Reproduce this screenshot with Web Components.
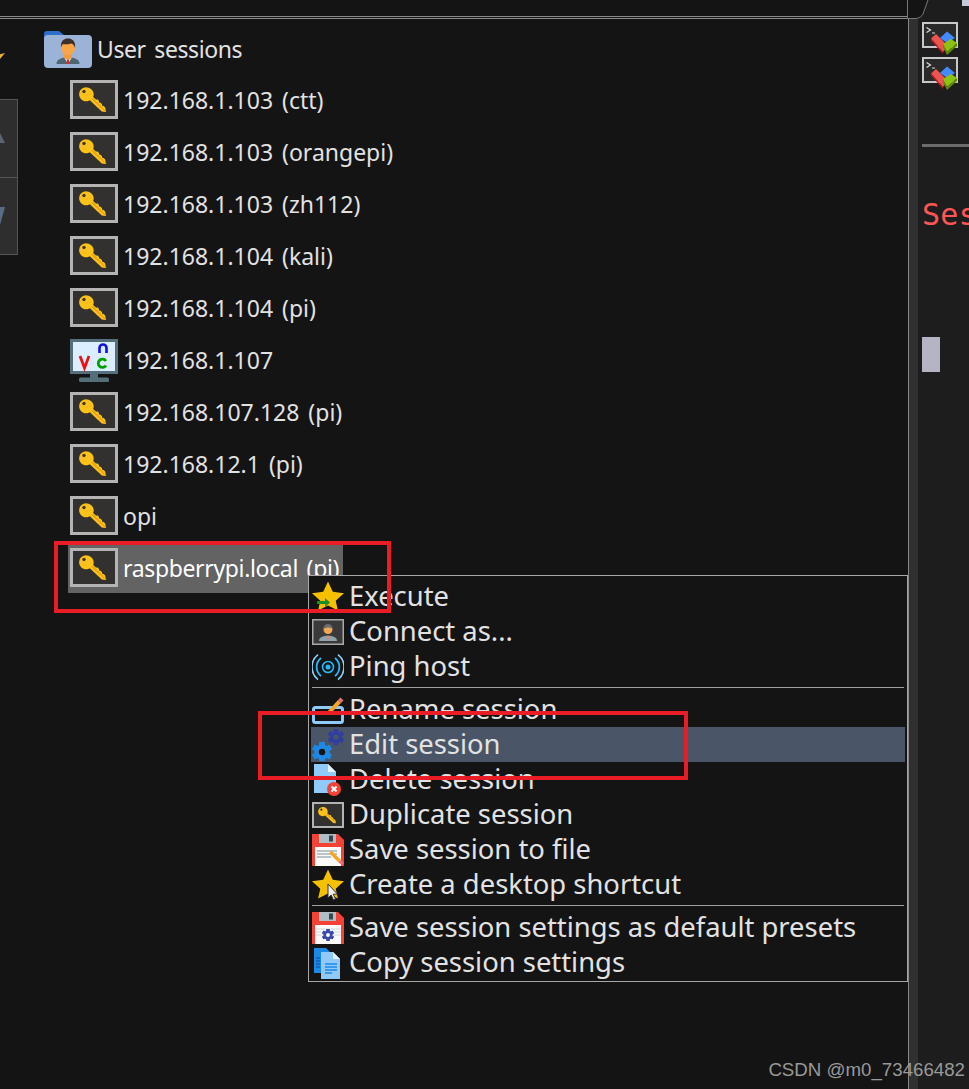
<!DOCTYPE html>
<html>
<head>
<meta charset="utf-8">
<title>User sessions</title>
<style>
  html, body { margin: 0; height: 100%; background: #141414; overflow: hidden; }
  body { font-family: "Noto Sans", "Open Sans", sans-serif; color: #e2e2e2; }
</style>
</head>
<body>
<app-shell>
  <side-strip slot="strip"></side-strip>
  <session-tree slot="tree">
    <session-row kind="folder" top>User sessions</session-row>
    <session-row>192.168.1.103 (ctt)</session-row>
    <session-row>192.168.1.103 (orangepi)</session-row>
    <session-row>192.168.1.103 (zh112)</session-row>
    <session-row>192.168.1.104 (kali)</session-row>
    <session-row>192.168.1.104 (pi)</session-row>
    <session-row kind="vnc">192.168.1.107</session-row>
    <session-row>192.168.107.128 (pi)</session-row>
    <session-row>192.168.12.1 (pi)</session-row>
    <session-row>opi</session-row>
    <session-row selected>raspberrypi.local (pi)</session-row>
  </session-tree>
  <terminal-pane slot="term"></terminal-pane>
</app-shell>

<context-menu>
  <menu-item icon="run">Execute</menu-item>
  <menu-item icon="user">Connect as...</menu-item>
  <menu-item icon="ping">Ping host</menu-item>
  <menu-sep></menu-sep>
  <menu-item icon="rename">Rename session</menu-item>
  <menu-item icon="gears" active>Edit session</menu-item>
  <menu-item icon="del">Delete session</menu-item>
  <menu-item icon="key">Duplicate session</menu-item>
  <menu-item icon="savefile">Save session to file</menu-item>
  <menu-item icon="star">Create a desktop shortcut</menu-item>
  <menu-sep></menu-sep>
  <menu-item icon="savegear">Save session settings as default presets</menu-item>
  <menu-item icon="copy">Copy session settings</menu-item>
</context-menu>

<mark-box style="left:54px;top:541px;width:337px;height:72px"></mark-box>
<mark-box style="left:258px;top:711px;width:430px;height:69px"></mark-box>
<water-mark>CSDN @m0_73466482</water-mark>

<script>
// icon drawings, shared by the tree and the menu
const keyShape = `
  <path d="M17 7.500a7 7 0 0 1 6.200 9.600l3 2.600 1.200-.4 1.600 1.600.1 1.600 1.500.2 1.400 1.500.2 1.600 1.400.1 1.600 1.700.6 3-.8 1.300-3.200-.3-12-11.300a7 7 0 1 1-2.800-12.900z" fill="#fcc21b"/>
  <path d="M21 18.500l14.500 13.500 1-.5-13-13z" fill="#e3a20f"/>
  <circle cx="14" cy="11.500" r="1.700" fill="#46350c"/>`;

const gear = (cx, cy, r, fill, hole) => {
  let teeth = '';
  for (let a = 0; a < 360; a += 60) {
    teeth += `<rect x="${cx - r * .34}" y="${cy - r * 1.3}" width="${r * .68}" height="${r * 2.6}" fill="${fill}" transform="rotate(${a} ${cx} ${cy})"/>`;
  }
  return teeth + `<circle cx="${cx}" cy="${cy}" r="${r}" fill="${fill}"/><circle cx="${cx}" cy="${cy}" r="${r * .42}" fill="${hole}"/>`;
};

const floppy = `
  <path d="M0 0h26l6 6v26H0z" fill="#f44336"/>
  <path d="M7 0h17v9H7z" fill="#b0bec5"/><rect x="17" y="1.500" width="4" height="6" fill="#37474f"/>
  <rect x="3" y="13" width="26" height="19" fill="#fafafa"/>`;

const star = `<path d="M16 .5l4.800 10.300 11.200 1.400-8.300 7.600 2.200 9.700L16 24.400 6.100 29.500l2.200-9.700L0 12.200l11.200-1.400z" fill="#f5c000"/>`;

const ICONS = {
  key: `<svg width="32" height="26" viewBox="0 0 48 39" style="margin-top:1px"><rect x="1.500" y="1.500" width="45" height="36" fill="#333130" stroke="#b4b4b4" stroke-width="3"/>${keyShape}</svg>`,
  run: `<svg width="32" height="32" viewBox="0 0 32 32">${star}<path d="M5 20h8v-3l5 4.500-5 4.500v-3H5z" fill="#1e8e1e"/></svg>`,
  star: `<svg width="32" height="32" viewBox="0 0 32 32">${star}<path d="M16 15v14l3.200-3 2.300 5 2-1-2.300-4.800h4.300z" fill="#eee" stroke="#333" stroke-width="1"/></svg>`,
  user: `<svg width="32" height="26" viewBox="0 0 32 26"><rect x=".75" y=".75" width="30.500" height="24.500" fill="#3a3a3a" stroke="#a8a8a8" stroke-width="1.500"/>
    <path d="M7 22c0-4 4-5 9-5.500 5 .5 9 1.500 9 5.500z" fill="#8fa3ad"/><path d="M14.500 17h3l-1.500 5z" fill="#e8836b"/>
    <circle cx="16" cy="10.500" r="4.500" fill="#f2a65a"/><path d="M11.500 10c0-3.500 2-5 4.500-5s4.500 1.500 4.500 5c-2-2-6-2-9 0z" fill="#6d6d6d"/></svg>`,
  ping: `<svg width="32" height="32" viewBox="0 0 32 32" fill="none"><circle cx="16" cy="16" r="2.500" fill="#29b6f6"/>
    <circle cx="16" cy="16" r="5.500" stroke="#29b6f6" stroke-width="1.600"/>
    <path d="M9 7A11.500 11.500 0 0 0 9 25M23 7A11.500 11.500 0 0 1 23 25" stroke="#29b6f6" stroke-width="1.800"/>
    <path d="M6 3.500A16 16 0 0 0 6 28.500M26 3.500A16 16 0 0 1 26 28.500" stroke="#8fd0f5" stroke-width="1.600"/></svg>`,
  rename: `<svg width="32" height="32" viewBox="0 0 32 32"><rect x="1.500" y="13.500" width="29" height="15" rx="2" fill="none" stroke="#90caf9" stroke-width="3"/>
    <path d="M15 18l11-12 3 3-11 11-4 1z" fill="#f5a623"/><path d="M26 6l2.500-2.500 3 3L29 9z" fill="#e57373"/></svg>`,
  gears: `<svg width="32" height="32" viewBox="0 0 32 32">${gear(24, 8, 6.200, '#303f9f', '#4a5568')}${gear(10, 23, 7.700, '#1e88e5', '#141414')}</svg>`,
  del: `<svg width="32" height="32" viewBox="0 0 32 32"><path d="M2 0h14l8 8v21H2z" fill="#90caf9"/><path d="M16 0l8 8h-8z" fill="#e3f2fd"/>
    <circle cx="22" cy="25" r="7" fill="#f44336"/><path d="M19.500 22.500l5 5M24.500 22.500l-5 5" stroke="#fff" stroke-width="2"/></svg>`,
  savefile: `<svg width="32" height="32" viewBox="0 0 32 32">${floppy}<path d="M5 17h20M5 20h20M5 23h14" stroke="#78909c" stroke-width="1.200"/><path d="M17 19l3-2 9 9-3 2z" fill="#f5a623"/><path d="M26 28l3-2 3 3-2 2z" fill="#e57373"/></svg>`,
  savegear: `<svg width="32" height="32" viewBox="0 0 32 32">${floppy}<path d="M3 17h26M3 20h26M3 23h26" stroke="#cfd8dc" stroke-width="1"/>${gear(16, 23, 4.600, '#3949ab', '#fff')}</svg>`,
  copy: `<svg width="32" height="32" viewBox="0 0 32 32"><path d="M2 1h12l6 6v19H2z" fill="#1e88e5"/><path d="M9 5h12l7 7v20H9z" fill="#90caf9"/><path d="M21 5l7 7h-7z" fill="#e3f2fd"/>
    <path d="M4 11h4M4 14h4M4 17h4M4 20h4" stroke="#0d47a1" stroke-width="1.200"/><path d="M13 17h12M13 20h12M13 23h12M13 26h7" stroke="#1e88e5" stroke-width="1.400"/></svg>`
};

const keyBig = `<svg width="48" height="39" viewBox="0 0 48 39"><rect x="1.500" y="1.500" width="45" height="36" fill="#333130" stroke="#b4b4b4" stroke-width="3"/>${keyShape}</svg>`;
const vncBig = `<svg width="48" height="44" viewBox="0 0 48 44" style="margin-top:2px"><rect x="1.500" y="1.500" width="45" height="32" fill="#dbeeff" stroke="#546e7a" stroke-width="3"/>
  <rect x="20" y="35" width="8" height="4" fill="#546e7a"/><rect x="9" y="38.500" width="30" height="4.500" rx="1.500" fill="#546e7a"/>
  <path d="M10 17l4.500 12L19 17" fill="none" stroke="#f01010" stroke-width="2.800"/>
  <path d="M29.500 14v-5a3.500 3.500 0 0 1 7 0v5" fill="none" stroke="#1010e0" stroke-width="2.600"/>
  <path d="M37 22a4.200 4.200 0 1 0 0 4.500" fill="none" stroke="#00a000" stroke-width="2.800" transform="translate(-1 0)"/></svg>`;
const folderBig = `<svg width="48" height="38" viewBox="0 0 48 38"><path d="M0 4a3 3 0 0 1 3-3h12l5 4H8v10H0z" fill="#2f6fc9"/><rect y="5" width="48" height="33" rx="4" fill="#9ab3d6"/>
  <path d="M12.500 34c0-5 5-6 11.500-7 6.500 1 11.500 2 11.500 7z" fill="#4c6672"/><path d="M20 27h8l-4 7z" fill="#fff"/><path d="M23 28h2l.5 6h-3z" fill="#d32f2f"/>
  <path d="M20 24h8v4l-4 2-4-2z" fill="#f39a3e"/><circle cx="24" cy="18" r="7" fill="#f7a64a"/><path d="M17 18c-1-8 4-9.500 7-9.500s8 1.500 7 9.500c-1-3-2-4-4-4.500-3 1-7 1-8 .5-1 1-2 2-2 4z" fill="#3e2f2a"/></svg>`;
const termIcon = `<svg width="38" height="35" viewBox="0 0 38 35"><rect x="1" y="1" width="34" height="24" fill="#2a2a2a" stroke="#c8c8c8" stroke-width="2"/>
  <path d="M4.500 5.500l4 2.500-4 2.500M10 11h3" fill="none" stroke="#ddd" stroke-width="1.200"/>
  <path d="M9 16.500l5-4.500 12 12-5 6z" fill="#ef5350"/><path d="M9 16.500v2l12 13.500v-2z" fill="#b71c1c"/>
  <path d="M18 16l7-6.500 8 6.500-8 5z" fill="#448aff"/>
  <path d="M21 22l8-5 6 4-10 9z" fill="#8bc310"/><path d="M21 22v3l4 8 10-9v-3l-10 9z" fill="#5d8a08"/></svg>`;

class AppShell extends HTMLElement {
  constructor() {
    super();
    this.attachShadow({ mode: 'open' });
    this.shadowRoot.innerHTML = `
      <style>
        :host { display: grid; grid-template-columns: 18px 890px 10px 51px; grid-template-rows: 19px 1070px; width: 969px; height: 1089px; background: #141414; }
        .top { grid-column: 1 / 3; box-sizing: border-box; padding-top: 16px; border-right: 1px solid #777; }
        .top i { display: block; height: 1px; background: #8a8a8a; margin-bottom: 1px; }
        .topright { grid-column: 3 / 5; position: relative; background: #1d1d1d; }
        .topright svg { display: block; }
        .tab { position: absolute; right: 0; top: 0; width: 7px; height: 6px; background: #c6c9d6; }
        .bar { background: #303030; border-left: 1px solid #888; box-sizing: border-box; }
      </style>
      <div class="top"><i></i><i></i></div>
      <div class="topright">
        <svg width="61" height="19" viewBox="0 0 61 19"><path d="M0 18.500H8C12 18 14 16 15 14L20 0H0z" fill="#141414"/><path d="M0 18.500H8C12 18 14 16 15 14L20 0" fill="none" stroke="#777"/></svg>
        <div class="tab"></div>
      </div>
      <slot name="strip"></slot>
      <slot name="tree"></slot>
      <div class="bar"></div>
      <slot name="term"></slot>`;
  }
}

class SideStrip extends HTMLElement {
  constructor() {
    super();
    this.attachShadow({ mode: 'open' });
    this.shadowRoot.innerHTML = `
      <style>
        :host { display: flex; flex-direction: column; overflow: hidden; }
        .star { height: 6px; margin-top: 34px; width: 5px; background: #e6b422; clip-path: polygon(0 20%, 100% 0, 0 100%); }
        .btns { margin-top: 40px; height: 156px; border: 1px solid #555; border-left: 0; box-sizing: border-box; background: #2e2e2e; display: flex; flex-direction: column; }
        .btn { flex: 1; display: flex; align-items: center; }
        .btn + .btn { border-top: 1px solid #555; }
      </style>
      <div class="star"></div>
      <div class="btns">
        <div class="btn"><svg width="6" height="10" viewBox="0 0 6 10"><path d="M0 0l5 10H0z" fill="#5a6472"/></svg></div>
        <div class="btn"><svg width="6" height="18" viewBox="0 0 6 18"><path d="M0 0h5L0 18z" fill="#5a6b85"/></svg></div>
      </div>`;
  }
}

class SessionTree extends HTMLElement {
  constructor() {
    super();
    this.attachShadow({ mode: 'open' });
    this.shadowRoot.innerHTML = `
      <style>:host { display: flex; flex-direction: column; padding: 2px 0 0 50px; box-sizing: border-box; }</style>
      <slot></slot>`;
  }
}

class SessionRow extends HTMLElement {
  constructor() {
    super();
    this.attachShadow({ mode: 'open' });
    const kind = this.getAttribute('kind');
    const icon = kind === 'folder' ? folderBig : kind === 'vnc' ? vncBig : keyBig;
    this.shadowRoot.innerHTML = `
      <style>
        :host { display: flex; height: 52px; padding-top: 3px; box-sizing: border-box; font-size: 23px; word-spacing: 3px; color: #e2e2e2; }
        :host([top]) { margin-left: -26px; letter-spacing: -.4px; }
        :host([selected]) { letter-spacing: -.35px; }
        .in { display: flex; align-items: center; gap: 5px; height: 49px; box-sizing: border-box; padding: 0 4px 2px 2px; }
        :host([top]) .in { padding-bottom: 0; }
        :host([selected]) .in { background: #636363; color: #fff; padding-right: 4px; }
        svg { display: block; flex: none; }
      </style>
      <div class="in">${icon}<slot></slot></div>`;
  }
}

class TerminalPane extends HTMLElement {
  constructor() {
    super();
    this.attachShadow({ mode: 'open' });
    this.shadowRoot.innerHTML = `
      <style>
        :host { display: flex; flex-direction: column; background: #1d1d1d; padding: 3px 0 0 4px; overflow: hidden; }
        svg { display: block; flex: none; }
        hr { border: 0; height: 3px; background: #6b6b6b; margin: 52px 0 0 0; flex: none; }
        .ses { font: 30px "DejaVu Sans Mono", monospace; letter-spacing: .3px; color: #f55; margin-top: 49px; line-height: 38px; white-space: nowrap; }
        .cur { width: 18px; height: 35px; background: #b4b4c4; margin-top: 103px; flex: none; }
      </style>
      ${termIcon}${termIcon}
      <hr>
      <div class="ses">Ses</div>
      <div class="cur"></div>`;
  }
}

class ContextMenu extends HTMLElement {
  constructor() {
    super();
    this.attachShadow({ mode: 'open' });
    this.shadowRoot.innerHTML = `
      <style>
        :host { position: absolute; left: 308px; top: 575px; width: 600px; height: 407px; box-sizing: border-box; border: 1px solid #a8a8a8; background: #141414; padding: 3px 2px; display: flex; flex-direction: column; }
      </style>
      <slot></slot>`;
  }
}

class MenuItem extends HTMLElement {
  constructor() {
    super();
    this.attachShadow({ mode: 'open' });
    this.shadowRoot.innerHTML = `
      <style>
        :host { display: flex; align-items: center; gap: 5px; height: 35px; padding-left: 1px; font-size: 27.4px; color: #e2e2e2; white-space: nowrap; flex: none; }
        :host([active]) { background: #4a5568; }
        .ic { width: 32px; height: 32px; display: flex; align-items: center; flex: none; }
        .tx { padding-bottom: 3px; }
        svg { display: block; }
      </style>
      <span class="ic">${ICONS[this.getAttribute('icon')]}</span><span class="tx"><slot></slot></span>`;
  }
}

class MenuSep extends HTMLElement {
  constructor() {
    super();
    this.attachShadow({ mode: 'open' });
    this.shadowRoot.innerHTML = `
      <style>
        :host { display: block; height: 8px; flex: none; box-sizing: border-box; padding: 3px 1px 0 1px; }
        div { height: 1px; background: #a0a0a0; }
      </style>
      <div></div>`;
  }
}

class MarkBox extends HTMLElement {
  constructor() {
    super();
    this.attachShadow({ mode: 'open' });
    this.shadowRoot.innerHTML = `
      <style>:host { position: absolute; box-sizing: border-box; border: 4px solid #ea1c26; pointer-events: none; }</style>`;
  }
}

class WaterMark extends HTMLElement {
  constructor() {
    super();
    this.attachShadow({ mode: 'open' });
    this.shadowRoot.innerHTML = `
      <style>:host { position: absolute; right: 4px; top: 1059px; font: 18.7px/22px "Liberation Sans", Arial, sans-serif; color: #999; white-space: nowrap; }</style>
      <slot></slot>`;
  }
}

customElements.define('app-shell', AppShell);
customElements.define('side-strip', SideStrip);
customElements.define('session-tree', SessionTree);
customElements.define('session-row', SessionRow);
customElements.define('terminal-pane', TerminalPane);
customElements.define('context-menu', ContextMenu);
customElements.define('menu-item', MenuItem);
customElements.define('menu-sep', MenuSep);
customElements.define('mark-box', MarkBox);
customElements.define('water-mark', WaterMark);
</script>
</body>
</html>
